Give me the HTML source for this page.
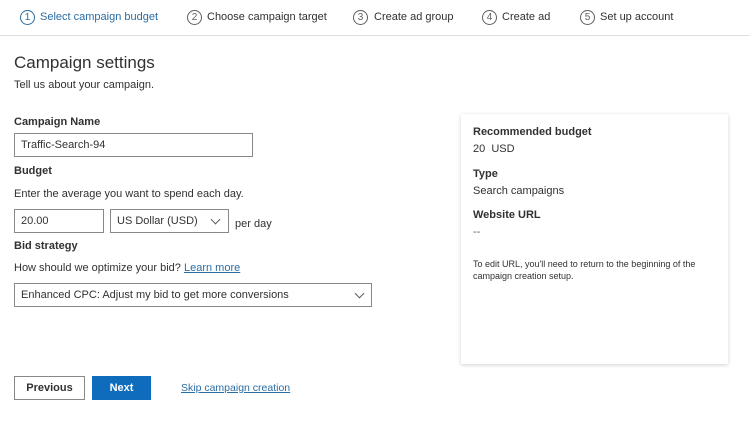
<!DOCTYPE html>
<html><head><style>
*{box-sizing:border-box;margin:0;padding:0}
body{width:750px;height:424px;background:#fff;font-family:"Liberation Sans",sans-serif;color:#323130;position:relative;overflow:hidden;font-size:11px}
.a{position:absolute;white-space:nowrap}
.circ{position:absolute;width:15px;height:15px;border:1px solid #605e5c;border-radius:50%;font-size:10px;line-height:13px;text-align:center;color:#605e5c;top:10px}
.st{position:absolute;top:11px;font-size:11px;color:#323130}
.box{position:absolute;border:1px solid #8a8886;background:#fff;height:24px;font-size:11px;padding-left:6px;line-height:22px}
.chev{position:absolute;top:6px;width:7px;height:7px;border-right:1px solid #605e5c;border-bottom:1px solid #605e5c;transform:rotate(45deg)}
b{font-weight:bold}
</style></head><body>
<div class="circ" style="left:20px;border-color:#2b6ca3;color:#2b6ca3">1</div><div class="st" style="left:40px;color:#2b6ca3">Select campaign budget</div>
<div class="circ" style="left:187px">2</div><div class="st" style="left:207px">Choose campaign target</div>
<div class="circ" style="left:353px">3</div><div class="st" style="left:374px">Create ad group</div>
<div class="circ" style="left:482px">4</div><div class="st" style="left:502px">Create ad</div>
<div class="circ" style="left:580px">5</div><div class="st" style="left:600px">Set up account</div>
<div class="a" style="left:0;top:35px;width:750px;height:1px;background:#e1dfdd"></div>
<div class="a" style="left:14px;top:53px;font-size:17px">Campaign settings</div>
<div class="a" style="left:14px;top:79px">Tell us about your campaign.</div>
<div class="a" style="left:14px;top:116px"><b>Campaign Name</b></div>
<div class="box" style="left:14px;top:133px;width:239px">Traffic-Search-94</div>
<div class="a" style="left:14px;top:165px"><b>Budget</b></div>
<div class="a" style="left:14px;top:188px">Enter the average you want to spend each day.</div>
<div class="box" style="left:14px;top:209px;width:90px">20.00</div>
<div class="box" style="left:110px;top:209px;width:119px">US Dollar (USD)<div class="chev" style="left:101px"></div></div>
<div class="a" style="left:235px;top:218px">per day</div>
<div class="a" style="left:14px;top:240px"><b>Bid strategy</b></div>
<div class="a" style="left:14px;top:262px">How should we optimize your bid? <span style="color:#2b6ca3;text-decoration:underline">Learn more</span></div>
<div class="box" style="left:14px;top:283px;width:358px">Enhanced CPC: Adjust my bid to get more conversions<div class="chev" style="left:341px"></div></div>
<div class="a" style="left:14px;top:376px;width:71px;height:24px;border:1px solid #8a8886;text-align:center;line-height:22px;font-weight:bold">Previous</div>
<div class="a" style="left:92px;top:376px;width:59px;height:24px;background:#0f6cbd;color:#fff;text-align:center;line-height:24px;font-weight:bold">Next</div>
<div class="a" style="left:181px;top:382px;color:#2b6ca3;text-decoration:underline;font-size:10.5px">Skip campaign creation</div>
<div class="a" style="left:461px;top:114px;width:267px;height:250px;background:#fff;box-shadow:0 1px 4px rgba(0,0,0,.18)"></div>
<div class="a" style="left:473px;top:126px"><b>Recommended budget</b></div>
<div class="a" style="left:473px;top:143px">20&nbsp; USD</div>
<div class="a" style="left:473px;top:168px"><b>Type</b></div>
<div class="a" style="left:473px;top:185px">Search campaigns</div>
<div class="a" style="left:473px;top:209px"><b>Website URL</b></div>
<div class="a" style="left:473px;top:226px;color:#605e5c">--</div>
<div class="a" style="left:473px;top:258px;font-size:9px;line-height:12px;white-space:normal;width:240px">To edit URL, you'll need to return to the beginning of the campaign creation setup.</div>
</body></html>
